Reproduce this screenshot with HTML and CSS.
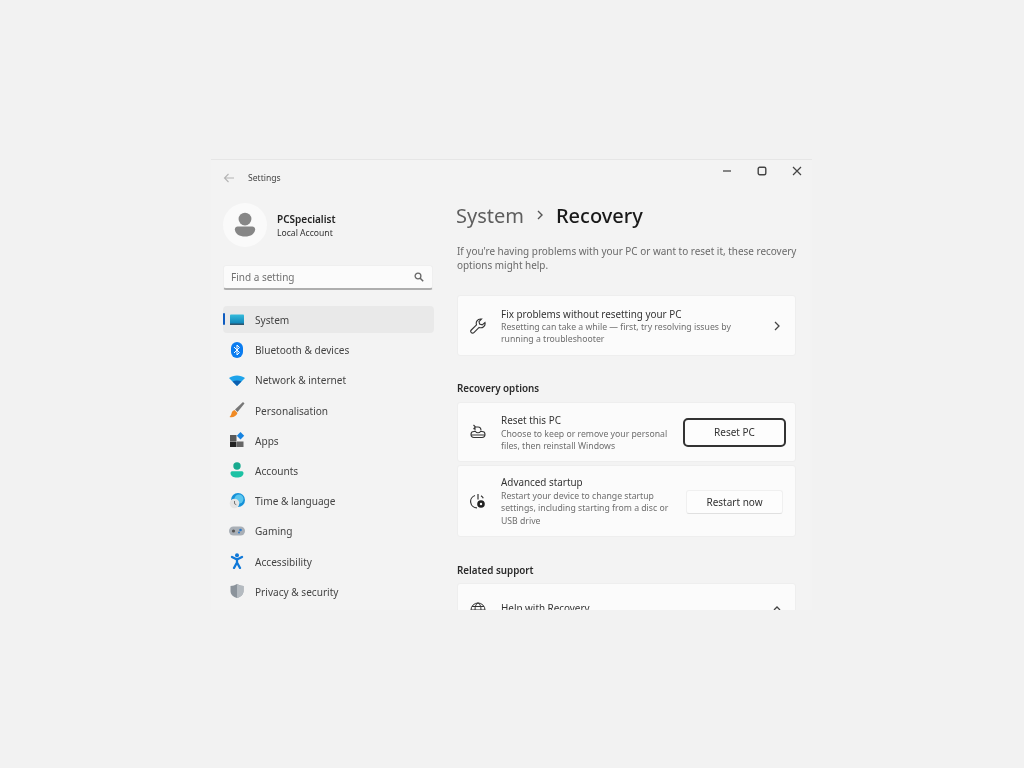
FILE: index.html
```html
<!DOCTYPE html>
<html lang="en">
<head>
<meta charset="utf-8">
<title>Settings</title>
<link rel="stylesheet" href="styles.css">
</head>
<body>
<div class="window">
  <header class="titlebar">
    <svg class="back" width="12" height="10" viewBox="0 0 12 10"><path d="M11 5H1.500M5.500 1 1.500 5l4 4" fill="none" stroke="#b4b4b4" stroke-width="1.100"/></svg>
    <span class="app-title">Settings</span>
    <div class="controls">
      <svg width="10" height="10" viewBox="0 0 10 10"><path d="M1 5h8" stroke="#555" stroke-width="1.400"/></svg>
      <svg width="10" height="10" viewBox="0 0 10 10"><rect x="1.200" y="1.200" width="7.600" height="7.600" rx="1.500" fill="none" stroke="#444" stroke-width="1.400"/></svg>
      <svg width="10" height="10" viewBox="0 0 10 10"><path d="m1 1 8 8M9 1 1 9" stroke="#444" stroke-width="1.200"/></svg>
    </div>
  </header>
  <div class="columns">
    <aside class="sidebar">
      <div class="profile">
        <div class="avatar">
          <svg width="24" height="28" viewBox="0 0 24 28"><circle cx="12" cy="7.500" r="7" fill="#868686"/><path d="M1 18.500c0-2 1.500-3 3-3h16c1.500 0 3 1 3 3 0 5-5 8-11 8S1 23.500 1 18.500z" fill="#868686"/></svg>
        </div>
        <div>
          <div class="profile-name">PCSpecialist</div>
          <div class="profile-sub">Local Account</div>
        </div>
      </div>
      <div class="search">
        <span>Find a setting</span>
        <svg width="10" height="10" viewBox="0 0 10 10"><circle cx="4" cy="4" r="2.900" fill="none" stroke="#666" stroke-width="1.300"/><path d="m6.200 6.200 3 3" stroke="#666" stroke-width="1.500"/></svg>
      </div>
      <nav class="nav">
        <a class="nav-item active">
          <svg class="nav-icon" width="16" height="16" viewBox="0 0 16 16"><defs><linearGradient id="sys" x1="0" y1="0" x2="0" y2="1"><stop offset="0" stop-color="#35bcdc"/><stop offset="1" stop-color="#0c7fb5"/></linearGradient></defs><rect x="1" y="2.500" width="14" height="10" rx=".8" fill="url(#sys)"/><rect x="1" y="11.500" width="14" height="1.500" fill="#2f566e"/></svg>
          <span>System</span>
        </a>
        <a class="nav-item">
          <svg class="nav-icon" width="16" height="16" viewBox="0 0 16 16"><rect x="2" y="0" width="12" height="16" rx="6" fill="#0a7cf0"/><path d="m5 5 5.500 5.500L8 13V3l2.500 2.500L5 11" fill="none" stroke="#fff" stroke-width="1"/></svg>
          <span>Bluetooth &amp; devices</span>
        </a>
        <a class="nav-item">
          <svg class="nav-icon" width="16" height="16" viewBox="0 0 16 16"><path d="M0 6C4.500 2.500 11.500 2.500 16 6L8 14z" fill="#1ea3ea"/><path d="M3.500 9.500C6 8 10 8 12.500 9.500L8 14z" fill="#0b5fb0"/></svg>
          <span>Network &amp; internet</span>
        </a>
        <a class="nav-item">
          <svg class="nav-icon" width="16" height="16" viewBox="0 0 16 16"><path d="M15.500 1.500 14 0 6 7.500 8.500 10z" fill="#777"/><path d="M5.500 8 8.500 11c-1 3-4.500 5-8 4 1.500-1 1.700-2.700 2.200-4.200C3.100 9.500 4.300 8.400 5.500 8z" fill="#f08a24"/></svg>
          <span>Personalisation</span>
        </a>
        <a class="nav-item">
          <svg class="nav-icon" width="16" height="16" viewBox="0 0 16 16"><rect x="1" y="3" width="6.500" height="6" fill="#5a5a5a"/><rect x="1" y="9.500" width="6.500" height="5.500" fill="#222"/><rect x="8" y="9.500" width="6.500" height="5.500" fill="#666"/><path d="m11.500 0 3.700 3.700-3.700 3.700-3.700-3.700z" fill="#1683e0"/></svg>
          <span>Apps</span>
        </a>
        <a class="nav-item">
          <svg class="nav-icon" width="16" height="16" viewBox="0 0 16 16"><circle cx="8" cy="4" r="3.700" fill="#17a98e"/><path d="M1.500 11c0-1.200 1-1.800 2-1.800h9c1 0 2 .6 2 1.800 0 3-3 4.600-6.500 4.600S1.500 14 1.500 11z" fill="#1cc2a4"/></svg>
          <span>Accounts</span>
        </a>
        <a class="nav-item">
          <svg class="nav-icon" width="16" height="16" viewBox="0 0 16 16"><circle cx="9" cy="7" r="7" fill="#1591d8"/><circle cx="10" cy="6" r="4.500" fill="#5cc6ee"/><circle cx="5.500" cy="10.500" r="4.800" fill="#e4e4e4"/><path d="M5.500 8v2.700l1.800 1" fill="none" stroke="#666" stroke-width=".9"/></svg>
          <span>Time &amp; language</span>
        </a>
        <a class="nav-item">
          <svg class="nav-icon" width="16" height="16" viewBox="0 0 16 16"><rect x="0" y="3.500" width="16" height="9" rx="4.500" fill="#a9afb6"/><circle cx="4.500" cy="8" r="1.600" fill="#555"/><circle cx="11.500" cy="7" r="1.300" fill="#2a78c8"/><circle cx="10" cy="9.500" r="1" fill="#2a78c8"/></svg>
          <span>Gaming</span>
        </a>
        <a class="nav-item">
          <svg class="nav-icon" width="16" height="16" viewBox="0 0 16 16"><circle cx="8" cy="2.200" r="2" fill="#0f78d8"/><path d="M3 4 8 6.500 13 4M8 6v3.500M8 9.500 5 15M8 9.500l3 5.500" fill="none" stroke="#0f78d8" stroke-width="2.300" stroke-linecap="round"/></svg>
          <span>Accessibility</span>
        </a>
        <a class="nav-item">
          <svg class="nav-icon" width="16" height="16" viewBox="0 0 16 16"><path d="M8 1c2 1.300 4 2 6.500 2v5c0 3.500-2.800 6-6.500 7-3.700-1-6.500-3.500-6.500-7V3C4 3 6 2.300 8 1z" fill="#8b939b"/><path d="M8 1c2 1.300 4 2 6.500 2v5c0 3.500-2.800 6-6.500 7z" fill="#b4bac0"/></svg>
          <span>Privacy &amp; security</span>
        </a>
      </nav>
    </aside>
    <main class="content">
      <h1 class="crumbs">
        <span class="crumb-parent">System</span>
        <svg width="8" height="10" viewBox="0 0 8 10"><path d="m2 1 4 4-4 4" fill="none" stroke="#555" stroke-width="1.400"/></svg>
        <span class="crumb-current">Recovery</span>
      </h1>
      <p class="intro">If you're having problems with your PC or want to reset it, these recovery options might help.</p>
      <section class="card fix">
        <svg class="card-icon" width="16" height="16" viewBox="0 0 16 16"><path d="M10.500 1a4.300 4.300 0 0 0-4 5.800L1.300 12a1.800 1.800 0 0 0 2.600 2.600l5.200-5.200A4.300 4.300 0 0 0 15 4.500l-2.800 2.300-2.600-.7-.6-2.500L11.500 1z" fill="none" stroke="#333" stroke-width="1.100"/></svg>
        <div class="card-text">
          <div class="card-title">Fix problems without resetting your PC</div>
          <div class="card-desc">Resetting can take a while — first, try resolving issues by running a troubleshooter</div>
        </div>
        <svg class="chev" width="8" height="10" viewBox="0 0 8 10"><path d="m2 1 4 4-4 4" fill="none" stroke="#444" stroke-width="1.300"/></svg>
      </section>
      <h2 class="section-title first">Recovery options</h2>
      <section class="card reset">
        <svg class="card-icon" width="16" height="16" viewBox="0 0 16 16"><path d="M5 6.500V3h3c2 0 3 1.300 3 3.500M3.500 1 5.500 3l-2 2" fill="none" stroke="#333" stroke-width="1.100"/><path d="M4 7.500h1.500c.5.800 1.500 1.300 2.500 1.300s2-.5 2.500-1.300H12c1.500 0 3 1.100 3 2.800 0 2-1.500 3.200-3 3.200H4c-1.500 0-3-1.200-3-3.200 0-1.700 1.500-2.800 3-2.800zM1.500 11h13" fill="none" stroke="#333" stroke-width="1.100"/></svg>
        <div class="card-text">
          <div class="card-title">Reset this PC</div>
          <div class="card-desc">Choose to keep or remove your personal files, then reinstall Windows</div>
        </div>
        <button class="btn focused">Reset PC</button>
      </section>
      <section class="card startup">
        <svg class="card-icon" width="16" height="16" viewBox="0 0 16 16"><path d="M5 2.500a6.300 6.300 0 0 0 2 12.300M8 1v5.500" fill="none" stroke="#333" stroke-width="1.200"/><path d="M11 2.700c1 .6 1.800 1.500 2.300 2.500" fill="none" stroke="#333" stroke-width="1.200"/><circle cx="11" cy="11" r="3.800" fill="#222"/><circle cx="11" cy="11" r="1.200" fill="#fbfbfb"/></svg>
        <div class="card-text">
          <div class="card-title">Advanced startup</div>
          <div class="card-desc">Restart your device to change startup settings, including starting from a disc or USB drive</div>
        </div>
        <button class="btn">Restart now</button>
      </section>
      <h2 class="section-title second">Related support</h2>
      <section class="card help">
        <svg class="card-icon" width="16" height="16" viewBox="0 0 16 16"><circle cx="8" cy="8" r="7" fill="none" stroke="#333" stroke-width="1"/><ellipse cx="8" cy="8" rx="3" ry="7" fill="none" stroke="#333" stroke-width="1"/><path d="M1 8h14M2 4.500h12M2 11.500h12" stroke="#333" stroke-width="1"/></svg>
        <div class="card-text"><div class="card-title">Help with Recovery</div></div>
        <svg class="chev up" width="8" height="8" viewBox="0 0 8 8"><path d="m1 6 3-3 3 3" fill="none" stroke="#444" stroke-width="1.300"/></svg>
      </section>
    </main>
  </div>
</div>
</body>
</html>
```
FILE: styles.css
```css
html, body {
  margin: 0;
  height: 100%;
  background: #f2f2f2;
  overflow: hidden;
}
body {
  padding: 159px 0 0 211px;
  box-sizing: border-box;
  font-family: "Noto Sans", "Open Sans", sans-serif;
  color: #2a2a2a;
}
.window {
  width: 601px;
  height: 451px;
  background: #f3f3f3;
  border-top: 1px solid #e6e6e6;
  box-sizing: border-box;
  overflow: hidden;
  filter: blur(.5px);
}
.titlebar {
  height: 24px;
  display: flex;
  align-items: center;
  padding: 0 10px 0 12px;
}
.back { margin-top: 11px; }
.app-title {
  margin: 11px 0 0 13px;
  font-size: 8.600px;
  color: #444;
}
.controls {
  margin-left: auto;
  display: flex;
  gap: 25px;
  margin-top: -3px;
}
.columns { display: flex; }
.sidebar {
  width: 223px;
  flex: none;
  padding: 18px 0 0 12px;
  box-sizing: border-box;
}
.profile {
  display: flex;
  align-items: center;
  gap: 10px;
  height: 45px;
}
.avatar {
  width: 44px;
  height: 44px;
  border-radius: 50%;
  background: #fafafa;
  display: flex;
  align-items: center;
  justify-content: center;
}
.avatar svg { width: 22px; height: 26px; }
.profile-name {
  font-size: 10px;
  font-weight: 600;
  color: #222;
  line-height: 14px;
  margin-top: 1px;
}
.profile-sub {
  font-size: 8.600px;
  color: #333;
  line-height: 12px;
  margin-top: 1px;
}
.search {
  margin-top: 18px;
  width: 210px;
  height: 25px;
  box-sizing: border-box;
  background: #fbfbfb;
  border-radius: 3px;
  border: 1px solid #efefef;
  border-bottom: 2px solid #aeaeae;
  display: flex;
  align-items: center;
  justify-content: space-between;
  padding: 0 8px 0 7px;
  font-size: 10px;
  color: #707070;
}
.nav {
  margin-top: 16px;
  display: flex;
  flex-direction: column;
  gap: 3.200px;
  width: 211px;
}
.nav-item {
  position: relative;
  height: 27px;
  display: flex;
  align-items: center;
  gap: 10px;
  padding-left: 7px;
  border-radius: 4px;
  font-size: 10.100px;
  color: #444;
}
.nav-item span { margin-top: 1px; }
.nav-item.active { background: #e9e9e9; }
.nav-item.active::before {
  content: "";
  position: absolute;
  left: 0;
  top: 7px;
  width: 2px;
  height: 12px;
  background: #0f5cc0;
  border-radius: 1px;
}
.nav-icon { flex: none; margin-left: -1px; }
.content {
  flex: 1;
  padding: 0 16px 0 23px;
  min-width: 0;
}
.crumbs {
  margin: 15px 0 0 -1px;
  height: 32px;
  display: flex;
  align-items: center;
  gap: 12px;
  font-size: 20px;
  font-weight: 400;
}
.crumb-parent { color: #5e5e5e; }
.crumb-current { color: #191919; font-weight: 500; }
.intro {
  margin: 13px 0 0;
  font-size: 9.950px;
  line-height: 14px;
  color: #6a6a6a;
  width: 345px;
}
.card {
  background: #fbfbfb;
  border: 1px solid #eeeeee;
  border-radius: 3px;
  box-sizing: border-box;
  display: flex;
  align-items: center;
  padding: 0 12px;
}
.card-icon { flex: none; margin-right: 15px; }
.card-text { flex: 1; min-width: 0; }
.card-title {
  font-size: 9.900px;
  line-height: 13px;
  color: #333;
}
.card-desc {
  font-size: 8.700px;
  line-height: 12px;
  color: #6e6e6e;
}
.chev { flex: none; margin-right: 2px; }
.chev.up { margin-top: 2px; }
.fix { margin-top: 23px; height: 61px; }
.fix .card-text { padding-top: 2px; }
.fix .card-desc { width: 255px; }
.section-title {
  margin: 0;
  font-size: 9.800px;
  line-height: 14px;
  font-weight: 600;
  color: #2a2a2a;
}
.section-title.first { margin-top: 26px; }
.section-title.second { margin-top: 27px; }
.reset { margin-top: 6px; height: 60px; padding-right: 9px; }
.reset .card-text { padding-top: 2px; }
.reset .card-desc { margin-top: 1px; }
.startup { margin-top: 3px; height: 72px; }
.startup .card-text { padding-top: 1px; }
.startup .card-desc { margin-top: 1px; line-height: 12.500px; }
.startup .btn { margin-top: 2px; }
.reset .card-desc, .startup .card-desc { width: 175px; }
.btn {
  flex: none;
  font: inherit;
  font-size: 10px;
  color: #333;
  background: #fdfdfd;
  border: 1px solid #f0f0f0;
  border-bottom-color: #e0e0e0;
  border-radius: 3px;
  width: 97px;
  height: 24px;
  padding: 0;
}
.btn.focused {
  width: 103px;
  height: 29px;
  border: 2px solid #333;
  border-radius: 5px;
}
.help { margin-top: 5px; height: 50px; align-items: flex-start; padding-top: 18px; }
```
